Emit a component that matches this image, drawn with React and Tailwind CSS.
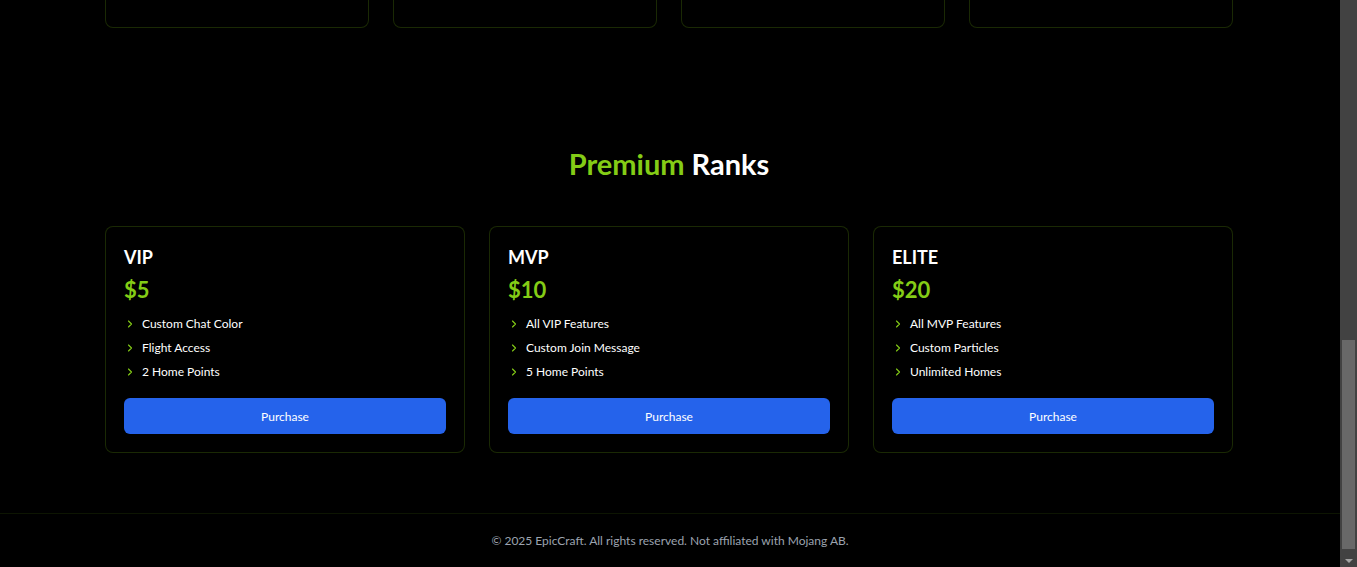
import React from "react";
import { ChevronRight } from "lucide-react";

const ranks = [
  { name: "VIP", price: "$5", perks: ["Custom Chat Color", "Flight Access", "2 Home Points"] },
  { name: "MVP", price: "$10", perks: ["All VIP Features", "Custom Join Message", "5 Home Points"] },
  { name: "ELITE", price: "$20", perks: ["All MVP Features", "Custom Particles", "Unlimited Homes"] },
];

function RankCard({ rank }) {
  return (
    <div className="rounded-lg border border-[#84cc16]/20 bg-black p-[18px]">
      <h3 className="text-lg font-bold leading-6 text-white">{rank.name}</h3>
      <p className="mt-[5px] text-[22px] font-bold leading-8 text-[#84cc16]">{rank.price}</p>
      <ul className="mt-2 space-y-1">
        {rank.perks.map((perk) => (
          <li key={perk} className="flex items-center gap-1.5 text-xs leading-5 text-white">
            <ChevronRight className="h-3 w-3 text-[#84cc16]" strokeWidth={2.25} />
            <span>{perk}</span>
          </li>
        ))}
      </ul>
      <button className="mt-4 h-9 w-full rounded-md bg-[#2563eb] pt-px text-xs text-white hover:bg-[#1d4ed8]">
        Purchase
      </button>
    </div>
  );
}

function FakeScrollbar() {
  return (
    <div className="relative w-[17px] shrink-0 bg-[#424242]">
      <div className="absolute left-[2px] right-[2px] top-[340px] h-[209px] bg-[#686868]" />
      <div className="absolute bottom-[4px] left-1/2 h-0 w-0 -translate-x-1/2 border-x-[4px] border-t-[4px] border-x-transparent border-t-[#a3a3a3]" />
    </div>
  );
}

export default function App() {
  return (
    <div className="flex h-[567px] overflow-hidden bg-black" style={{ fontFamily: 'Lato, "Noto Sans", sans-serif' }}>
      <div className="flex flex-1 flex-col">
        {/* tail of the previous section */}
        <div className="mx-auto w-full max-w-6xl pb-[120px] pl-[11px] pr-[13px]">
          <div className="grid grid-cols-4 gap-6">
            {[0, 1, 2, 3].map((i) => (
              <div key={i} className="h-[28px] rounded-b-lg border border-t-0 border-[#84cc16]/20" />
            ))}
          </div>
        </div>

        {/* premium ranks */}
        <section className="mx-auto w-full max-w-6xl pb-[60px] pl-[11px] pr-[13px]">
          <h2 className="mb-[46px] text-center text-[29px] font-bold leading-8 text-white">
            <span className="text-[#84cc16]">Premium</span> Ranks
          </h2>
          <div className="grid grid-cols-3 gap-6">
            {ranks.map((rank) => (
              <RankCard key={rank.name} rank={rank} />
            ))}
          </div>
        </section>

        <footer className="border-t border-[#84cc16]/10 pb-[15px] pt-[17px] text-center text-xs leading-5 text-[#9ca3af]">
          © 2025 EpicCraft. All rights reserved. Not affiliated with Mojang AB.
        </footer>
      </div>
      <FakeScrollbar />
    </div>
  );
}
